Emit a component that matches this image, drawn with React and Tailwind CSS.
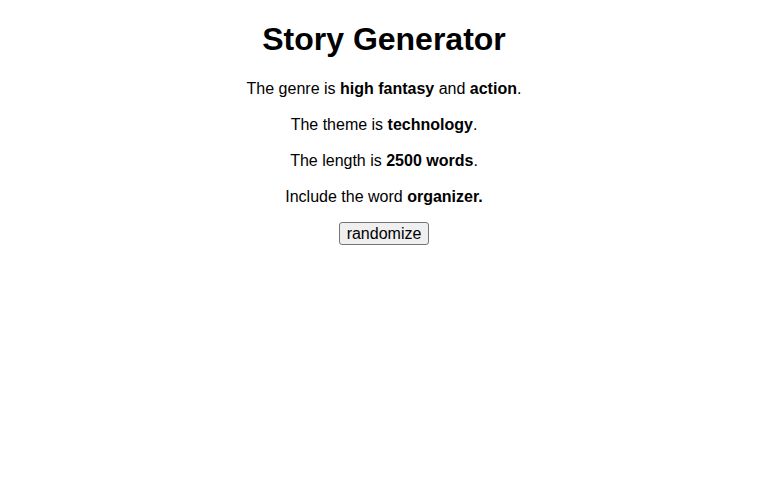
import React, { useState } from "react";

const genres = ["high fantasy", "science fiction", "mystery", "horror", "romance"];
const subGenres = ["action", "comedy", "drama", "adventure", "thriller"];
const themes = ["technology", "friendship", "betrayal", "survival", "identity"];
const lengths = ["500 words", "1000 words", "2500 words", "5000 words"];
const words = ["organizer.", "lantern.", "compass.", "whisper.", "mirror."];

const pick = (list) => list[Math.floor(Math.random() * list.length)];

export default function App() {
  const [story, setStory] = useState({
    genre: "high fantasy",
    subGenre: "action",
    theme: "technology",
    length: "2500 words",
    word: "organizer.",
  });

  // Roll a fresh prompt
  const randomize = () =>
    setStory({
      genre: pick(genres),
      subGenre: pick(subGenres),
      theme: pick(themes),
      length: pick(lengths),
      word: pick(words),
    });

  return (
    <div className="flex flex-col items-center text-center text-black bg-white min-h-[480px] font-['Liberation_Sans',Arial,sans-serif]">
      <h1 className="mt-[21px] text-[32px] leading-[37px] font-bold">Story Generator</h1>

      <div className="mt-[22px] flex flex-col gap-[18px] text-[16px] leading-[18px]">
        <p>
          The genre is <b>{story.genre}</b> and <b>{story.subGenre}</b>.
        </p>
        <p>
          The theme is <b>{story.theme}</b>.
        </p>
        <p>
          The length is <b>{story.length}</b>.
        </p>
        <p>
          Include the word <b>{story.word}</b>
        </p>
      </div>

      <button
        onClick={randomize}
        className="mt-[16px] h-[23px] px-[7px] text-[16px] leading-[19px] bg-[#efefef] border border-[#767676] rounded-[3px]"
      >
        randomize
      </button>
    </div>
  );
}
